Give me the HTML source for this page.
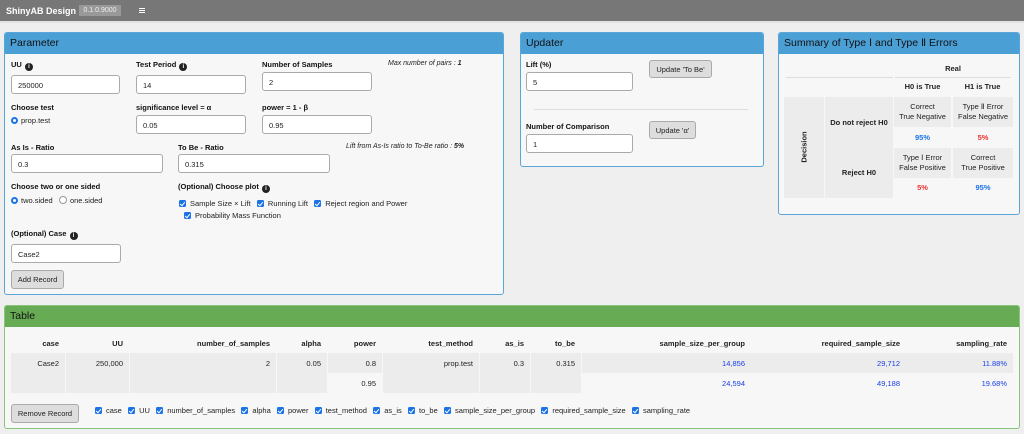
<!DOCTYPE html>
<html><head><meta charset="utf-8"><style>
*{box-sizing:border-box;margin:0;padding:0}
body{width:1024px;height:434px;background:#efefef;font-family:"Liberation Sans",Arial,sans-serif;font-size:8px;color:#222;position:relative;overflow:hidden}
.a{position:absolute}
.hdr{left:0;top:0;width:1024px;height:23px;background:#777;border-bottom:2px solid #e4e4e4}
.box{position:absolute;background:#f7f7f7;border:1px solid #5aa6d8;border-radius:3px}
.bh{position:absolute;left:0;top:0;right:0;height:21px;background:#4a9fd5;color:#111;font-size:10.5px;padding:4px 5px;border-radius:2px 2px 0 0}
.lb{position:absolute;font-weight:bold;font-size:7.5px;color:#111}
.in{position:absolute;background:#fff;border:1px solid #aaa;border-radius:3px;font-size:7.5px;padding:5px 6px;color:#222;height:19px}
.btn{position:absolute;background:#ddd;border:1px solid #aaa;border-radius:3px;font-size:7.5px;text-align:center;line-height:17px;color:#222}
.i{display:inline-block;width:8px;height:8px;border-radius:50%;background:#222;color:#fff;font-size:6px;line-height:8px;text-align:center;vertical-align:-1px;font-weight:bold;margin-left:1px}
.rad{display:inline-block;width:7px;height:7px;border-radius:50%;background:#fff;border:2px solid #1a73e8;vertical-align:-1px;margin-right:3px}
.rado{display:inline-block;width:8px;height:8px;border-radius:50%;background:#fff;border:1px solid #999;vertical-align:-1px;margin-right:3px}
.cb{display:inline-block;width:7px;height:7px;border-radius:1.5px;background:#1a73e8;vertical-align:-1px;margin-right:4px;position:relative}
.cb:after{content:"";position:absolute;left:2px;top:0.5px;width:2px;height:4px;border:solid #fff;border-width:0 1px 1px 0;transform:rotate(40deg)}
.t{position:absolute;font-size:7.5px;white-space:nowrap}
.c{position:absolute;text-align:center;font-size:7.5px;display:flex;align-items:center;justify-content:center;flex-direction:column;line-height:10px}
.r{position:absolute;text-align:right;font-size:7.5px;padding-right:6px;padding-top:6px}
.hb{position:absolute;left:139px;width:6px;height:1px;background:#fff}
</style></head><body>
<div class="a hdr"></div>
<div class="t" style="left:6px;top:6px;color:#fff;font-weight:bold;font-size:9px">ShinyAB Design</div>
<div class="a" style="left:79px;top:5px;width:42px;height:11px;background:#999;color:#eee;font-size:7px;text-align:center;line-height:11px">0.1.0.9000</div>
<div class="hb" style="top:8px"></div><div class="hb" style="top:10px"></div><div class="hb" style="top:12px"></div>

<!-- Parameter -->
<div class="box" style="left:4px;top:32px;width:500px;height:263px"><div class="bh">Parameter</div></div>
<div class="lb" style="left:11px;top:60px">UU <span class="i">i</span></div>
<div class="in" style="left:11px;top:75px;width:109px">250000</div>
<div class="lb" style="left:136px;top:60px">Test Period <span class="i">i</span></div>
<div class="in" style="left:136px;top:75px;width:110px">14</div>
<div class="lb" style="left:262px;top:60px">Number of Samples</div>
<div class="in" style="left:262px;top:72px;width:110px">2</div>
<div class="t" style="left:388px;top:60px;font-style:italic;font-size:7px">Max number of pairs : <b>1</b></div>
<div class="lb" style="left:11px;top:103px">Choose test</div>
<div class="t" style="left:11px;top:116px"><span class="rad"></span>prop.test</div>
<div class="lb" style="left:136px;top:103px">significance level = α</div>
<div class="in" style="left:136px;top:115px;width:110px">0.05</div>
<div class="lb" style="left:262px;top:103px">power = 1 - β</div>
<div class="in" style="left:262px;top:115px;width:110px">0.95</div>
<div class="lb" style="left:11px;top:143px">As Is - Ratio</div>
<div class="in" style="left:11px;top:154px;width:152px">0.3</div>
<div class="lb" style="left:178px;top:143px">To Be - Ratio</div>
<div class="in" style="left:178px;top:154px;width:152px">0.315</div>
<div class="t" style="left:346px;top:143px;font-style:italic;font-size:7px">Lift from As-Is ratio to To-Be ratio : <b>5%</b></div>
<div class="lb" style="left:11px;top:182px">Choose two or one sided</div>
<div class="t" style="left:11px;top:196px"><span class="rad"></span>two.sided &nbsp;&nbsp;<span class="rado"></span>one.sided</div>
<div class="lb" style="left:178px;top:182px">(Optional) Choose plot <span class="i">i</span></div>
<div class="t" style="left:179px;top:199px"><span class="cb"></span>Sample Size × Lift &nbsp;&nbsp;<span class="cb"></span>Running Lift &nbsp;&nbsp;<span class="cb"></span>Reject region and Power</div>
<div class="t" style="left:184px;top:211px"><span class="cb"></span>Probability Mass Function</div>
<div class="lb" style="left:11px;top:229px">(Optional) Case <span class="i">i</span></div>
<div class="in" style="left:11px;top:244px;width:110px">Case2</div>
<div class="btn" style="left:11px;top:270px;width:53px;height:19px">Add Record</div>

<!-- Updater -->
<div class="box" style="left:520px;top:32px;width:244px;height:135px"><div class="bh">Updater</div></div>
<div class="lb" style="left:526px;top:60px">Lift (%)</div>
<div class="in" style="left:526px;top:72px;width:107px">5</div>
<div class="btn" style="left:649px;top:60px;width:63px;height:18px">Update 'To Be'</div>
<div class="a" style="left:534px;top:109px;width:214px;height:1px;background:#ddd"></div>
<div class="lb" style="left:526px;top:122px">Number of Comparison</div>
<div class="in" style="left:526px;top:134px;width:107px">1</div>
<div class="btn" style="left:649px;top:121px;width:47px;height:18px">Update 'α'</div>

<!-- Summary -->
<div class="box" style="left:778px;top:32px;width:242px;height:183px"><div class="bh">Summary of Type Ⅰ and Type Ⅱ Errors</div></div>
<div class="a" style="left:784px;top:60px;width:229px;height:138px;background:#f7f7f7"></div>
<div class="a" style="left:786px;top:77px;width:107px;height:1px;background:#ddd"></div>
<div class="a" style="left:895px;top:77px;width:116px;height:1px;background:#ddd"></div>
<div class="c" style="left:893px;top:60px;width:120px;height:17px;font-weight:bold">Real</div>
<div class="c" style="left:893px;top:77px;width:59px;height:20px;font-weight:bold">H0 is True</div>
<div class="c" style="left:952px;top:77px;width:61px;height:20px;font-weight:bold">H1 is True</div>
<div class="a" style="left:784px;top:97px;width:40px;height:101px;background:#ececec"></div>
<div class="a" style="left:804px;top:147px;transform:translate(-50%,-50%) rotate(-90deg);font-weight:bold;font-size:7.5px">Decision</div>
<div class="c" style="left:825px;top:97px;width:68px;height:51px;background:#ececec;font-weight:bold">Do not reject H0</div>
<div class="c" style="left:825px;top:148px;width:68px;height:50px;background:#ececec;font-weight:bold">Reject H0</div>
<div class="c" style="left:894px;top:97px;width:57px;height:30px;background:#ececec">Correct<br>True Negative</div>
<div class="c" style="left:953px;top:97px;width:60px;height:30px;background:#ececec">Type Ⅱ Error<br>False Negative</div>
<div class="c" style="left:894px;top:128px;width:57px;height:20px;color:#1a73e8;font-weight:bold">95%</div>
<div class="c" style="left:953px;top:128px;width:60px;height:20px;color:#e33;font-weight:bold">5%</div>
<div class="c" style="left:894px;top:148px;width:57px;height:30px;background:#ececec">Type Ⅰ Error<br>False Positive</div>
<div class="c" style="left:953px;top:148px;width:60px;height:30px;background:#ececec">Correct<br>True Positive</div>
<div class="c" style="left:894px;top:178px;width:57px;height:20px;color:#e33;font-weight:bold">5%</div>
<div class="c" style="left:953px;top:178px;width:60px;height:20px;color:#1a73e8;font-weight:bold">95%</div>

<!-- Table -->
<div class="box" style="left:4px;top:305px;width:1016px;height:124px;border-color:#8cc47c"><div class="bh" style="background:#67ab55">Table</div></div>
<div class="a" style="left:11px;top:333px;width:1002px;height:60px;background:#f7f7f7"></div>
<div class="a" style="left:11px;top:353px;width:54px;height:40px;background:#ececec"></div>
<div class="a" style="left:66px;top:353px;width:63px;height:40px;background:#ececec"></div>
<div class="a" style="left:130px;top:353px;width:146px;height:40px;background:#ececec"></div>
<div class="a" style="left:277px;top:353px;width:50px;height:40px;background:#ececec"></div>
<div class="a" style="left:328px;top:353px;width:54px;height:20px;background:#ececec"></div>
<div class="a" style="left:383px;top:353px;width:96px;height:40px;background:#ececec"></div>
<div class="a" style="left:480px;top:353px;width:50px;height:40px;background:#ececec"></div>
<div class="a" style="left:531px;top:353px;width:50px;height:40px;background:#ececec"></div>
<div class="a" style="left:582px;top:353px;width:431px;height:20px;background:#ececec"></div>
<div class="r" style="left:11px;top:333px;width:54px;font-weight:bold">case</div>
<div class="r" style="left:65px;top:333px;width:64px;font-weight:bold">UU</div>
<div class="r" style="left:129px;top:333px;width:147px;font-weight:bold">number_of_samples</div>
<div class="r" style="left:276px;top:333px;width:51px;font-weight:bold">alpha</div>
<div class="r" style="left:327px;top:333px;width:55px;font-weight:bold">power</div>
<div class="r" style="left:382px;top:333px;width:97px;font-weight:bold">test_method</div>
<div class="r" style="left:479px;top:333px;width:51px;font-weight:bold">as_is</div>
<div class="r" style="left:530px;top:333px;width:51px;font-weight:bold">to_be</div>
<div class="r" style="left:581px;top:333px;width:170px;font-weight:bold">sample_size_per_group</div>
<div class="r" style="left:751px;top:333px;width:155px;font-weight:bold">required_sample_size</div>
<div class="r" style="left:906px;top:333px;width:107px;font-weight:bold">sampling_rate</div>
<div class="r" style="left:11px;top:353px;width:54px">Case2</div>
<div class="r" style="left:65px;top:353px;width:64px">250,000</div>
<div class="r" style="left:129px;top:353px;width:147px">2</div>
<div class="r" style="left:276px;top:353px;width:51px">0.05</div>
<div class="r" style="left:327px;top:353px;width:55px">0.8</div>
<div class="r" style="left:382px;top:353px;width:97px">prop.test</div>
<div class="r" style="left:479px;top:353px;width:51px">0.3</div>
<div class="r" style="left:530px;top:353px;width:51px">0.315</div>
<div class="r" style="left:581px;top:353px;width:170px;color:#1a3ee8">14,856</div>
<div class="r" style="left:751px;top:353px;width:155px;color:#1a3ee8">29,712</div>
<div class="r" style="left:906px;top:353px;width:107px;color:#1a3ee8">11.88%</div>
<div class="r" style="left:327px;top:373px;width:55px">0.95</div>
<div class="r" style="left:581px;top:373px;width:170px;color:#1a3ee8">24,594</div>
<div class="r" style="left:751px;top:373px;width:155px;color:#1a3ee8">49,188</div>
<div class="r" style="left:906px;top:373px;width:107px;color:#1a3ee8">19.68%</div>
<div class="btn" style="left:11px;top:404px;width:68px;height:19px">Remove Record</div>
<div class="t" style="left:95px;top:406px"><span class="cb"></span>case &nbsp;&nbsp;<span class="cb"></span>UU &nbsp;&nbsp;<span class="cb"></span>number_of_samples &nbsp;&nbsp;<span class="cb"></span>alpha &nbsp;&nbsp;<span class="cb"></span>power &nbsp;&nbsp;<span class="cb"></span>test_method &nbsp;&nbsp;<span class="cb"></span>as_is &nbsp;&nbsp;<span class="cb"></span>to_be &nbsp;&nbsp;<span class="cb"></span>sample_size_per_group &nbsp;&nbsp;<span class="cb"></span>required_sample_size &nbsp;&nbsp;<span class="cb"></span>sampling_rate</div>
</body></html>
